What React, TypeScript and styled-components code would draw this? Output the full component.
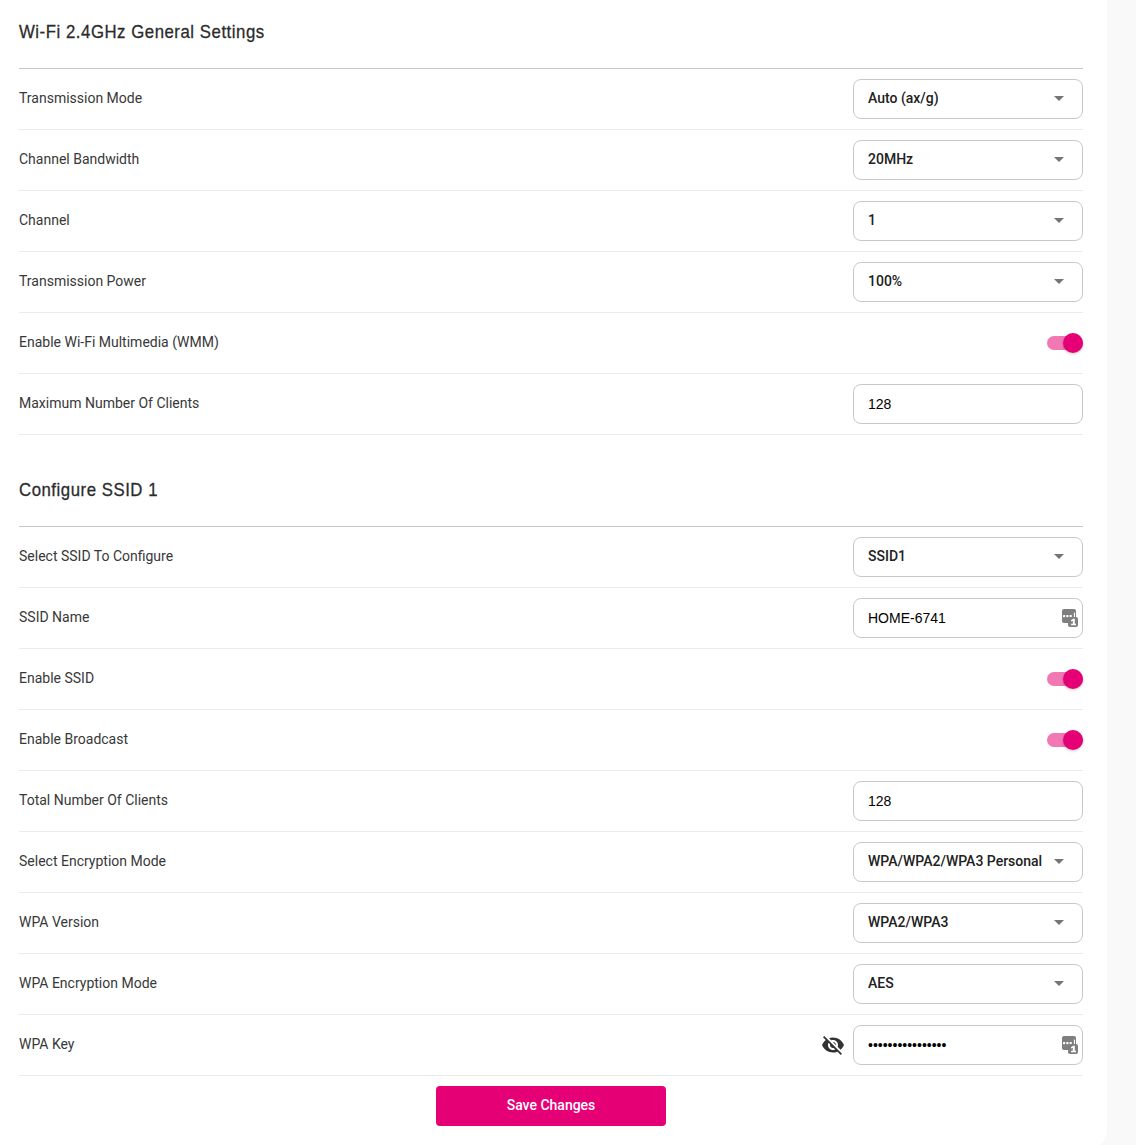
import React, { useState } from "react";
import styled, { createGlobalStyle } from "styled-components";
import { MdVisibilityOff, MdVisibility } from "react-icons/md";

const GlobalStyle = createGlobalStyle`
  *, *::before, *::after { box-sizing: border-box; }
  body {
    margin: 0;
    background: #f9f9f9;
    font-family: Roboto, "Noto Sans", sans-serif;
    font-size: 14px;
    color: #383838;
  }
`;

const Page = styled.main`
  height: 1145px;
  overflow: hidden;
`;

const Panel = styled.form`
  width: 1107px;
  height: 1147px;
  padding: 0 24px 0 19px;
  background: #fff;
  border-radius: 0 0 16px 0;
`;

const SectionHeader = styled.header<{ $spaced?: boolean }>`
  display: flex;
  align-items: center;
  height: ${(p) => (p.$spaced ? 92 : 69)}px;
  padding-top: ${(p) => (p.$spaced ? 18 : 0)}px;
  padding-bottom: ${(p) => (p.$spaced ? 0 : 5)}px;
  border-bottom: 1px solid #c6c6c6;
`;

const SectionTitle = styled.h2`
  margin: 0;
  font-family: "Liberation Sans", Arial, sans-serif;
  font-size: 19px;
  font-weight: 400;
  line-height: 24px;
  letter-spacing: 0.6px;
  white-space: nowrap;
  transform: scaleX(0.883);
  transform-origin: left center;
  -webkit-text-stroke: 0.3px #2b2b2b;
  color: #2b2b2b;
`;

const Row = styled.div`
  display: flex;
  align-items: center;
  justify-content: space-between;
  height: 61px;
  border-bottom: 1px solid #ebebeb;
`;

const Label = styled.span`
  line-height: 20px;
  padding-bottom: 2px;
`;

const Control = styled.div`
  display: flex;
  align-items: center;
  gap: 8px;
`;

const Select = styled.button`
  display: flex;
  align-items: center;
  justify-content: space-between;
  width: 230px;
  height: 40px;
  padding: 0 18px 2px 14px;
  border: 1px solid #c8c8c8;
  border-radius: 8px;
  background: #fff;
  font: 500 14px/20px Roboto, "Noto Sans", sans-serif;
  color: #212121;
  white-space: nowrap;
`;

const Caret = styled.span`
  border: 5px solid transparent;
  border-top-color: #757575;
  border-bottom-width: 0;
`;

const Field = styled.label`
  display: flex;
  align-items: center;
  width: 230px;
  height: 40px;
  padding: 0 4px 0 14px;
  border: 1px solid #c8c8c8;
  border-radius: 8px;
  background: #fff;
`;

const Input = styled.input`
  flex: 1;
  min-width: 0;
  padding: 0;
  border: 0;
  outline: 0;
  background: none;
  font: 14px/20px "Liberation Sans", Arial, sans-serif;
  color: #000;
`;

const Toggle = styled.button<{ $on: boolean }>`
  display: flex;
  align-items: center;
  justify-content: ${(p) => (p.$on ? "flex-end" : "flex-start")};
  width: 36px;
  height: 14px;
  padding: 0;
  border: 0;
  border-radius: 7px;
  background: ${(p) => (p.$on ? "#f278b4" : "#9e9e9e")};
`;

const Thumb = styled.span<{ $on: boolean }>`
  flex: none;
  width: 20px;
  height: 20px;
  border-radius: 50%;
  background: ${(p) => (p.$on ? "#e60076" : "#fafafa")};
  box-shadow: 0 1px 3px rgba(0, 0, 0, 0.22);
`;

const RevealButton = styled.button`
  display: flex;
  padding: 0;
  border: 0;
  background: none;
  color: #333;
`;

const Actions = styled.footer`
  display: flex;
  justify-content: center;
  padding-top: 10px;
`;

const SaveButton = styled.button`
  width: 230px;
  height: 40px;
  padding: 0 0 2px;
  border: 0;
  border-radius: 4px;
  background: #e60076;
  font: 500 14px/20px Roboto, "Noto Sans", sans-serif;
  color: #fff;
`;

function VaultIcon() {
  return (
    <svg width="16" height="18" viewBox="0 0 16 18" aria-hidden="true">
      <rect width="14" height="14" rx="2" fill="#7f7f7f" />
      <g fill="#fff">
        <rect x="1" y="6" width="2.2" height="2.2" rx="0.6" />
        <rect x="4.3" y="6" width="2.2" height="2.2" rx="0.6" />
        <rect x="7.6" y="6" width="2.2" height="2.2" rx="0.6" />
        <rect x="11.9" y="3.6" width="1.1" height="4.6" />
      </g>
      <rect x="6" y="8" width="10" height="10" rx="2" fill="#7f7f7f" />
      <path d="M9 11.2 11.2 9.7h1.6v5.1h1.2v1.5H9.1v-1.5h1.7v-3.1L9 12.5z" fill="#fff" />
    </svg>
  );
}

function SelectRow({ label, value }: { label: string; value: string }) {
  return (
    <Row>
      <Label>{label}</Label>
      <Select type="button">
        {value}
        <Caret />
      </Select>
    </Row>
  );
}

function TextRow({ label, value, vault }: { label: string; value: string; vault?: boolean }) {
  return (
    <Row>
      <Label>{label}</Label>
      <Field>
        <Input defaultValue={value} aria-label={label} />
        {vault && <VaultIcon />}
      </Field>
    </Row>
  );
}

function ToggleRow({ label }: { label: string }) {
  const [on, setOn] = useState(true);
  return (
    <Row>
      <Label>{label}</Label>
      <Toggle type="button" role="switch" aria-checked={on} $on={on} onClick={() => setOn(!on)}>
        <Thumb $on={on} />
      </Toggle>
    </Row>
  );
}

function KeyRow({ label }: { label: string }) {
  const [shown, setShown] = useState(false);
  return (
    <Row>
      <Label>{label}</Label>
      <Control>
        <RevealButton type="button" aria-label="Show key" onClick={() => setShown(!shown)}>
          {shown ? <MdVisibility size={24} /> : <MdVisibilityOff size={24} />}
        </RevealButton>
        <Field>
          <Input type={shown ? "text" : "password"} defaultValue="home-network-key" aria-label={label} />
          <VaultIcon />
        </Field>
      </Control>
    </Row>
  );
}

export default function App() {
  return (
    <Page>
      <GlobalStyle />
      <Panel onSubmit={(e) => e.preventDefault()}>
        <SectionHeader>
          <SectionTitle>Wi-Fi 2.4GHz General Settings</SectionTitle>
        </SectionHeader>
        <SelectRow label="Transmission Mode" value="Auto (ax/g)" />
        <SelectRow label="Channel Bandwidth" value="20MHz" />
        <SelectRow label="Channel" value="1" />
        <SelectRow label="Transmission Power" value="100%" />
        <ToggleRow label="Enable Wi-Fi Multimedia (WMM)" />
        <TextRow label="Maximum Number Of Clients" value="128" />

        <SectionHeader $spaced>
          <SectionTitle>Configure SSID 1</SectionTitle>
        </SectionHeader>
        <SelectRow label="Select SSID To Configure" value="SSID1" />
        <TextRow label="SSID Name" value="HOME-6741" vault />
        <ToggleRow label="Enable SSID" />
        <ToggleRow label="Enable Broadcast" />
        <TextRow label="Total Number Of Clients" value="128" />
        <SelectRow label="Select Encryption Mode" value="WPA/WPA2/WPA3 Personal" />
        <SelectRow label="WPA Version" value="WPA2/WPA3" />
        <SelectRow label="WPA Encryption Mode" value="AES" />
        <KeyRow label="WPA Key" />
        <Actions>
          <SaveButton type="submit">Save Changes</SaveButton>
        </Actions>
      </Panel>
    </Page>
  );
}
